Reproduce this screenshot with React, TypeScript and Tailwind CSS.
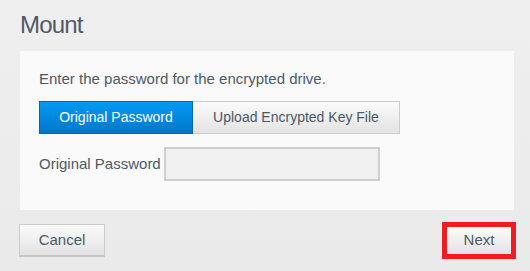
import React, { useState } from 'react';

const App: React.FC = () => {
  const [mode, setMode] = useState<'password' | 'keyfile'>('password');
  const [password, setPassword] = useState('');

  return (
    <div
      className="w-[530px] h-[271px] bg-gradient-to-b from-[#efefef] to-[#eaeaea] px-[20px] pt-[13px] text-[#4d5966]"
      style={{ fontFamily: '"Liberation Sans", Arial, sans-serif' }}
    >
      <h1 className="text-[24px] leading-[24px] tracking-[-0.8px] text-[#4f5b67]">Mount</h1>

      <div className="mt-[14px] w-[494px] h-[159px] bg-[#fafafa] pl-[19px] pt-[18px]">
        <p className="text-[15px] leading-[20px]">Enter the password for the encrypted drive.</p>

        <div className="mt-[12px] flex">
          <button
            onClick={() => setMode('password')}
            className={`h-[33px] w-[154px] text-[14px] border ${
              mode === 'password'
                ? 'bg-gradient-to-b from-[#0399f2] to-[#0077c9] border-[#0068b0] text-white'
                : 'bg-gradient-to-b from-[#fbfbfb] to-[#e3e3e3] border-[#cccccc] text-[#4d5966]'
            }`}
          >
            Original Password
          </button>
          <button
            onClick={() => setMode('keyfile')}
            className={`h-[33px] w-[207px] text-[14px] border ${
              mode === 'keyfile'
                ? 'bg-gradient-to-b from-[#0399f2] to-[#0077c9] border-[#0068b0] text-white'
                : 'bg-gradient-to-b from-[#fbfbfb] to-[#e3e3e3] border-[#cccccc] border-l-0 text-[#4d5966]'
            }`}
          >
            Upload Encrypted Key File
          </button>
        </div>

        <div className="mt-[13px] flex items-center">
          <label className="text-[15px] leading-[20px] w-[125px] shrink-0 whitespace-nowrap">Original Password</label>
          <input
            type="password"
            value={password}
            onChange={(e) => setPassword(e.target.value)}
            className="h-[34px] w-[216px] bg-[#f0f0f0] border-2 border-[#cfcfcf] outline-none px-2"
          />
        </div>
      </div>

      <div className="mt-[14px] flex items-start justify-between">
        <button className="-ml-[1px] h-[33px] w-[86px] text-[15px] bg-gradient-to-b from-[#fbfbfb] to-[#e3e3e3] border border-[#cccccc] border-b-2 border-b-[#c4c4c4] text-[#4d5966]">
          Cancel
        </button>
        <div className="-mt-[2px] -mr-[6px] border-[5px] border-[#ee1c25]">
          <button className="block h-[27px] w-[64px] text-[15px] bg-gradient-to-b from-[#fbfbfb] to-[#e3e3e3] text-[#4d5966]">
            Next
          </button>
        </div>
      </div>
    </div>
  );
};

export default App;
